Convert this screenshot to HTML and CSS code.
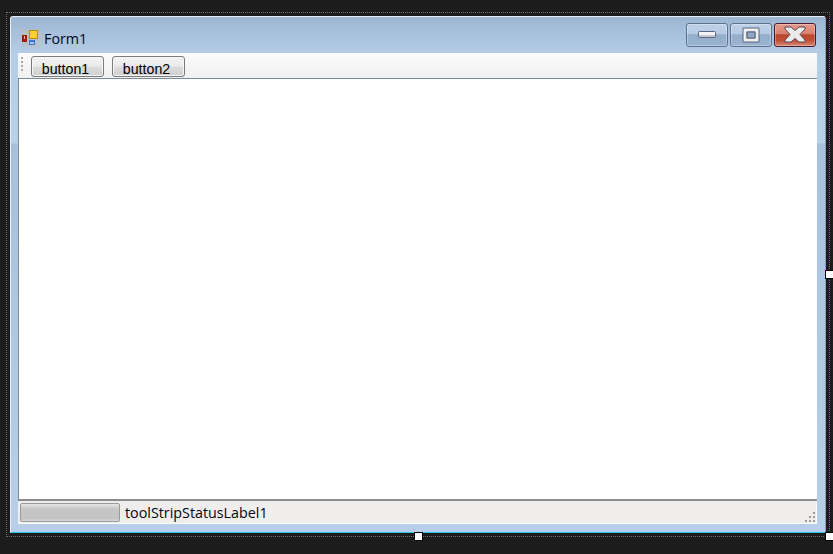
FILE: index.html
```html
<!DOCTYPE html>
<html lang="en">
<head>
<meta charset="utf-8">
<title>Form1</title>
<link rel="stylesheet" href="styles.css">
</head>
<body>
<div class="selection"></div>
<div class="form">
  <div class="titlebar">
    <svg class="app-icon" width="18" height="18" viewBox="0 0 18 18">
      <rect x="0" y="0" width="18" height="18" fill="#c0c0bc" opacity=".6"/>
      <rect x="1" y="6" width="5" height="7" fill="#a8160c"/>
      <rect x="3" y="7" width="1" height="3" fill="#f4b0a0"/>
      <rect x="8" y="1" width="9" height="9" fill="#b98a10"/>
      <rect x="9" y="2" width="7" height="7" fill="#f9cd3c"/>
      <rect x="8" y="11" width="6" height="5" fill="#3d74d4"/>
      <rect x="9" y="13" width="4" height="2" fill="#a8c8f4"/>
    </svg>
    <span class="title">Form1</span>
    <div class="caption">
      <div class="cap-btn">
        <svg width="18" height="8" viewBox="0 0 18 8"><rect x=".5" y=".5" width="17" height="6" rx="1" fill="#f4f4f4" stroke="#56647e"/><rect x="1" y="4" width="16" height="2" fill="#c4c8cf"/></svg>
      </div>
      <div class="cap-btn">
        <svg width="18" height="16" viewBox="0 0 18 16"><path fill-rule="evenodd" d="M1 1h16v14H1zM5 5v6h8V5z" fill="#f0f0f0" stroke="#56647e"/><rect x="5" y="5" width="8" height="6" fill="#8fa6c4" stroke="#56647e"/></svg>
      </div>
      <div class="cap-btn cap-close">
        <svg width="22" height="17" viewBox="0 0 22 17"><path d="M1 1h6l4 3.500L15 1h6v2l-5 5.500 5 5.500v2h-6l-4-3.500L7 16H1v-2l5-5.500L1 3z" fill="#ebebeb" stroke="#5b4450"/></svg>
      </div>
    </div>
  </div>
  <div class="client">
    <div class="toolstrip">
      <div class="grip"><i></i><i></i><i></i><i></i></div>
      <button class="btn">button1</button>
      <button class="btn">button2</button>
    </div>
    <div class="panel"></div>
    <div class="status">
      <div class="progress"></div>
      <span class="status-label">toolStripStatusLabel1</span>
      <svg class="sizer" width="11" height="11" viewBox="0 0 11 11" fill="#9c9c9c">
        <rect x="8" y="0" width="2" height="2"/>
        <rect x="4" y="4" width="2" height="2"/><rect x="8" y="4" width="2" height="2"/>
        <rect x="0" y="8" width="2" height="2"/><rect x="4" y="8" width="2" height="2"/><rect x="8" y="8" width="2" height="2"/>
      </svg>
    </div>
  </div>
</div>
<div class="handle handle-right"></div>
<div class="handle handle-bottom"></div>
<div class="handle handle-corner"></div>
</body>
</html>
```
FILE: styles.css
```css
html, body {
  margin: 0;
  height: 100%;
  overflow: hidden;
  background: #1c1c1c;
}
.selection {
  position: absolute;
  left: 6px;
  top: 12px;
  width: 824px;
  height: 525px;
  box-sizing: border-box;
  border: 1px dotted #6e6e6e;
}
.form {
  position: absolute;
  left: 10px;
  top: 16px;
  width: 816px;
  height: 517px;
  box-sizing: border-box;
  display: flex;
  flex-direction: column;
  border-top: 1px solid #e8eef5;
  border-left: 1px solid #e8eef5;
  border-right: 1px solid #2bc4ea;
  border-bottom: 1px solid #2bc4ea;
  border-radius: 3px 3px 0 0;
  background: linear-gradient(to bottom, #9cb6d3 0, #b5cde6 37px, #b9d0e9 126px, #a7c0db 127px, #b9cfe9 100%);
}
.titlebar {
  height: 36px;
  display: flex;
  align-items: center;
  flex: none;
  padding: 6px 9px 0 10px;
  box-sizing: border-box;
}
.app-icon { flex: none; }
.title {
  margin-left: 5px;
  font: 14.300px "Open Sans", sans-serif;
  color: #000814;
}
.caption {
  margin-left: auto;
  display: flex;
  gap: 2px;
  margin-top: -7px;
}
.cap-btn {
  width: 42px;
  height: 24px;
  box-sizing: border-box;
  border: 1px solid #5f7190;
  border-radius: 3px;
  display: flex;
  align-items: center;
  justify-content: center;
  box-shadow: inset 0 0 0 1px rgba(255,255,255,.3);
  background: linear-gradient(to bottom, #bdd0e6 0, #b5cae2 47%, #94adca 48%, #9ab3cf 100%);
}
.cap-close {
  border-color: #4a1a2c;
  background: linear-gradient(to bottom, #e59a8c 0, #d9806e 47%, #b9452c 48%, #c04f36 75%, #d98a78 100%);
}
.client {
  flex: 1;
  display: flex;
  flex-direction: column;
  margin: 0 8px 8px 7px;
}
.toolstrip {
  height: 25px;
  flex: none;
  display: flex;
  align-items: flex-start;
  padding-top: 3px;
  box-sizing: border-box;
  background: linear-gradient(to bottom, #fbfbfb 0, #f0f0f0 100%);
}
.grip {
  width: 13px;
  padding-left: 3px;
  box-sizing: border-box;
  display: flex;
  flex-direction: column;
  gap: 2px;
  margin-top: 1px;
}
.grip i {
  display: block;
  width: 2px;
  height: 2px;
  background: #a9a9a9;
}
.btn {
  width: 73px;
  height: 21px;
  padding: 4px 4px 0 0;
  margin-right: 8px;
  box-sizing: border-box;
  border: 1px solid #7b7b7b;
  border-radius: 3px;
  box-shadow: inset 0 0 0 1px #f6f6f6;
  font: 14.200px/17px "Liberation Sans", Arial, sans-serif;
  color: #000;
  background: linear-gradient(to bottom, #f3f3f3 0, #ebebeb 48%, #dcdcdc 52%, #d0d0d0 100%);
}
.panel {
  flex: 1;
  background: #fff;
  border-top: 1px solid #7e8a96;
  border-left: 1px solid #7e8a96;
  border-bottom: 2px solid #8c8c8c;
}
.status {
  height: 23px;
  flex: none;
  display: flex;
  align-items: center;
  padding: 0 0 0 2px;
  box-sizing: border-box;
  background: #f0eded;
  border-bottom: 1px solid #fbfbfb;
  border-right: 1px solid #fbfbfb;
}
.progress {
  width: 100px;
  height: 19px;
  box-sizing: border-box;
  border: 1px solid #9a9a9a;
  border-radius: 2px;
  background: linear-gradient(to bottom, #e6e6e6 0, #c6c6c6 30%, #c4c4c4 85%, #d8d8d8 100%);
}
.status-label {
  margin-left: 5px;
  font: 14.300px "Open Sans", sans-serif;
  color: #000814;
}
.sizer {
  margin-left: auto;
  margin-top: 11px;
}
.handle {
  position: absolute;
  width: 7px;
  height: 7px;
  background: #fff;
  border: 1px solid #000;
}
.handle-right { left: 825px; top: 270px; }
.handle-bottom { left: 414px; top: 532px; }
.handle-corner { left: 825px; top: 532px; }
```
